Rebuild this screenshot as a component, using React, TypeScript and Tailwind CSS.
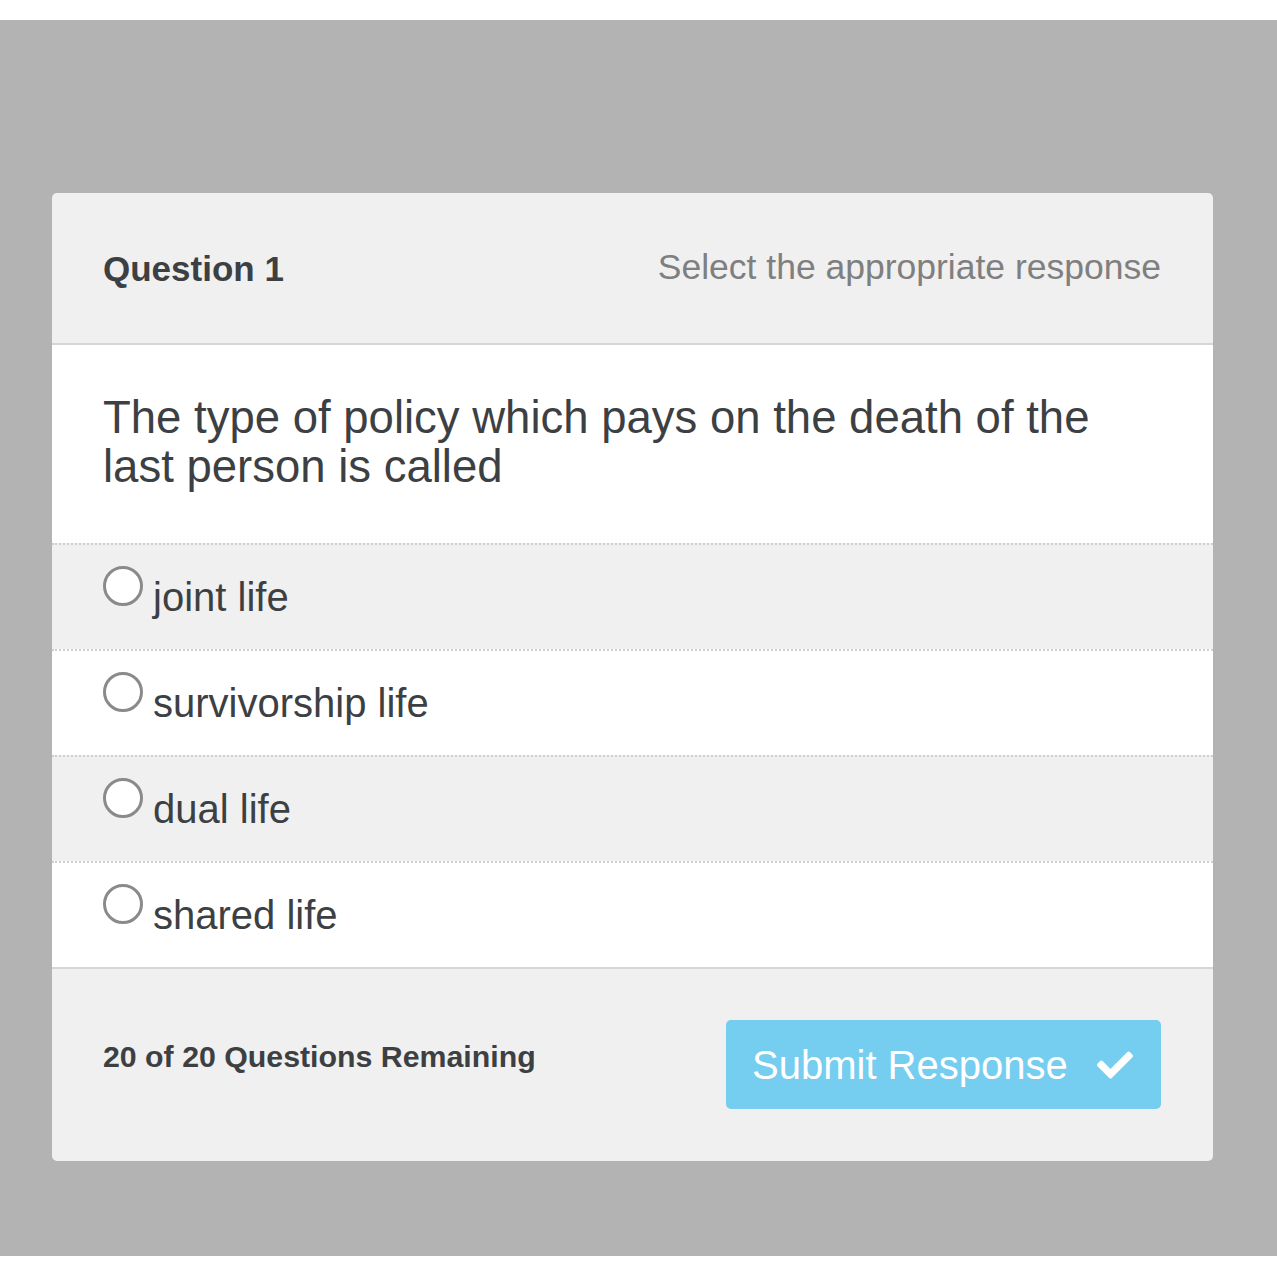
import { FaCheck } from 'react-icons/fa'

const options = ['joint life', 'survivorship life', 'dual life', 'shared life']

export default function App() {
    return (
        <div className="w-[1277px] h-[1277px] bg-white font-['Liberation_Sans',Arial,sans-serif]">
            <div className="h-[20px]" />
            <div className="h-[1236px] bg-[#b3b3b3] pt-[173px]">
                {/* card */}
                <div className="ml-[52px] w-[1161px] rounded-[5px] overflow-hidden bg-[#f0f0f0]">
                    <div className="h-[152px] flex items-center justify-between pl-[51px] pr-[52px] border-b-2 border-[#d6d6d6]">
                        <div className="text-[35px] font-bold text-[#3d4043] leading-none">Question 1</div>
                        <div className="text-[35.5px] text-[#7f7f7f] leading-none">Select the appropriate response</div>
                    </div>

                    <div className="h-[198px] bg-white pt-[48px] pl-[51px] pr-[52px]">
                        <div className="text-[45.5px] leading-[49px] text-[#3d4043]">
                            The type of policy which pays on the death of the
                            <br />
                            last person is called
                        </div>
                    </div>

                    {options.map((opt, i) => (
                        <div
                            key={opt}
                            className={`h-[106px] border-t-2 border-dotted border-[#cfcfcf] flex items-start pt-[21px] pl-[51px] ${
                                i % 2 === 0 ? 'bg-[#f0f0f0]' : 'bg-white'
                            }`}
                        >
                            <div className="w-10 h-10 rounded-full border-[3px] border-[#8a8a8a] bg-white shrink-0" />
                            <div className="ml-[10px] mt-[11px] text-[40px] leading-[40px] text-[#3d4043]">{opt}</div>
                        </div>
                    ))}

                    <div className="h-[194px] border-t-2 border-[#d6d6d6] flex items-start justify-between pt-[51px] pl-[51px] pr-[52px]">
                        <div className="mt-[22px] text-[30.3px] leading-[30px] font-bold text-[#3d4043]">20 of 20 Questions Remaining</div>
                        <button className="w-[435px] h-[89px] rounded-[5px] bg-[#75cdf0] flex items-center justify-between pl-[26px] pr-[28px]">
                            <span className="text-[40px] leading-none text-white">Submit Response</span>
                            <FaCheck className="text-white w-[36px] h-[36px]" />
                        </button>
                    </div>
                </div>
            </div>
        </div>
    )
}
